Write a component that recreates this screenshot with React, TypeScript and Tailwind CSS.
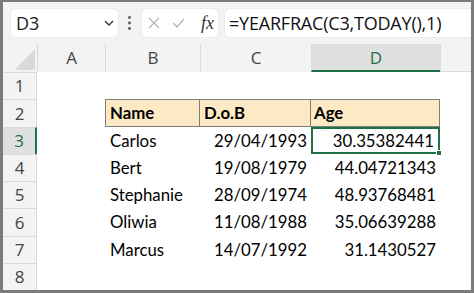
const rows = [
  { n: 1 },
  { n: 2, head: true },
  { n: 3, name: 'Carlos', dob: '29/04/1993', age: '30.35382441', selected: true },
  { n: 4, name: 'Bert', dob: '19/08/1979', age: '44.04721343' },
  { n: 5, name: 'Stephanie', dob: '28/09/1974', age: '48.93768481' },
  { n: 6, name: 'Oliwia', dob: '11/08/1988', age: '35.06639288' },
  { n: 7, name: 'Marcus', dob: '14/07/1992', age: '31.1430527' },
  { n: 8 },
];

const uiFont = "font-['Open_Sans',sans-serif]";
const cellFont = "font-['Lato',sans-serif] text-[16.8px]";

function Chevron() {
  return (
    <svg width="10" height="6" viewBox="0 0 10 6" fill="none">
      <path d="M1 1l4 4 4-4" stroke="#333" strokeWidth="1.3" />
    </svg>
  );
}

export default function App() {
  return (
    <div className="h-[293px] w-[474px] overflow-hidden border-x-[3px] border-t-2 border-b-[3px] border-[#7b7b7b] bg-white">
      {/* formula bar */}
      <div className={`flex h-[42px] items-center bg-[#f3f3f3] pl-[8px] ${uiFont}`}>
        <div className="flex h-[28px] w-[107px] items-center justify-between rounded-[5px] bg-white pl-[5px] pr-[4px] text-[18px] text-[#222] shadow-[0_0_0_1px_#ececec]">
          <span>D3</span>
          <Chevron />
        </div>
        <svg className="mx-[8px]" width="7" height="16" viewBox="0 0 7 16">
          <circle cx="3.5" cy="2.5" r="1.4" fill="#555" />
          <circle cx="3.5" cy="8" r="1.4" fill="#555" />
          <circle cx="3.5" cy="13.5" r="1.4" fill="#555" />
        </svg>
        <div className="ml-[1px] flex h-[28px] w-[76px] items-center rounded-[5px] bg-white pl-[6px] shadow-[0_0_0_1px_#ececec]">
          <svg width="12" height="12" viewBox="0 0 12 12">
            <path d="M1 1l10 10M11 1L1 11" stroke="#b5b5b5" strokeWidth="1.2" />
          </svg>
          <svg className="ml-[12px]" width="13" height="10" viewBox="0 0 13 10">
            <path d="M1 5l4 4 7-8" stroke="#b5b5b5" strokeWidth="1.2" fill="none" />
          </svg>
          <span className="ml-[16px] font-['Liberation_Serif',serif] text-[18px] italic text-[#333]">fx</span>
        </div>
        <div className="ml-[7px] flex h-[28px] flex-1 items-center rounded-l-[5px] bg-white pl-[4px] text-[18px] tracking-[-0.2px] text-[#111] shadow-[0_0_0_1px_#ececec]">
          =YEARFRAC(C3,TODAY(),1)
        </div>
      </div>

      {/* sheet grid */}
      <div className="grid grid-cols-[34px_68px_95px_111px_129px_1fr] grid-rows-[28px_repeat(8,27.25px)]">
        <div className="flex items-end justify-end bg-[#f3f3f3] pb-[2px] pr-[2px]">
          <div className="h-[20px] w-[20px] bg-[linear-gradient(to_bottom_right,transparent_50%,#d9d9d9_50%)]" />
        </div>
        {['A', 'B', 'C'].map((c) => (
          <div key={c} className={`flex items-center justify-center border-l border-[#dadada] bg-[#f3f3f3] text-[17px] text-[#444] ${uiFont}`}>
            {c}
          </div>
        ))}
        <div className={`flex items-center justify-center border-b-2 border-l border-b-[#1e7145] border-l-[#dadada] bg-[#e0e0e0] pt-[2px] text-[17px] text-[#1e7145] ${uiFont}`}>
          D
        </div>
        <div className="border-l border-b border-[#dadada] bg-[#f3f3f3]" />

        {rows.map((r) => (
          <div key={r.n} className="contents">
            <div
              className={`flex items-center justify-center border-t text-[17px] ${uiFont} ${
                r.selected
                  ? 'border-t-[#dadada] border-r-2 border-r-[#1e7145] bg-[#e0e0e0] text-[#1e7145]'
                  : 'border-r border-[#dadada] bg-[#f3f3f3] text-[#444]'
              }`}
            >
              {r.n}
            </div>
            <div />
            {r.head ? (
              <>
                <div className={`flex items-center border border-[#7f7f7f] bg-[#fde9c4] pl-[4px] font-bold text-black ${cellFont}`}>Name</div>
                <div className={`flex items-center border-y border-r border-[#7f7f7f] bg-[#fde9c4] pl-[4px] font-bold text-black ${cellFont}`}>D.o.B</div>
                <div className={`flex items-center border-y border-r border-[#7f7f7f] bg-[#fde9c4] pl-[3px] font-bold text-black ${cellFont}`}>Age</div>
              </>
            ) : r.name ? (
              <>
                <div className={`flex items-center pl-[5px] text-black ${cellFont}`}>{r.name}</div>
                <div className={`flex items-center justify-end pr-[4px] text-black ${cellFont}`}>{r.dob}</div>
                <div
                  className={`relative flex items-center justify-end pr-[4px] text-black ${cellFont} ${
                    r.selected ? 'border-2 border-[#1e7145] pr-[2px]' : ''
                  }`}
                >
                  {r.age}
                  {r.selected && <span className="absolute -bottom-[4px] -right-[4px] h-[6px] w-[6px] border border-white bg-[#1e7145]" />}
                </div>
              </>
            ) : (
              <>
                <div />
                <div />
                <div />
              </>
            )}
            <div />
          </div>
        ))}
      </div>
    </div>
  );
}
